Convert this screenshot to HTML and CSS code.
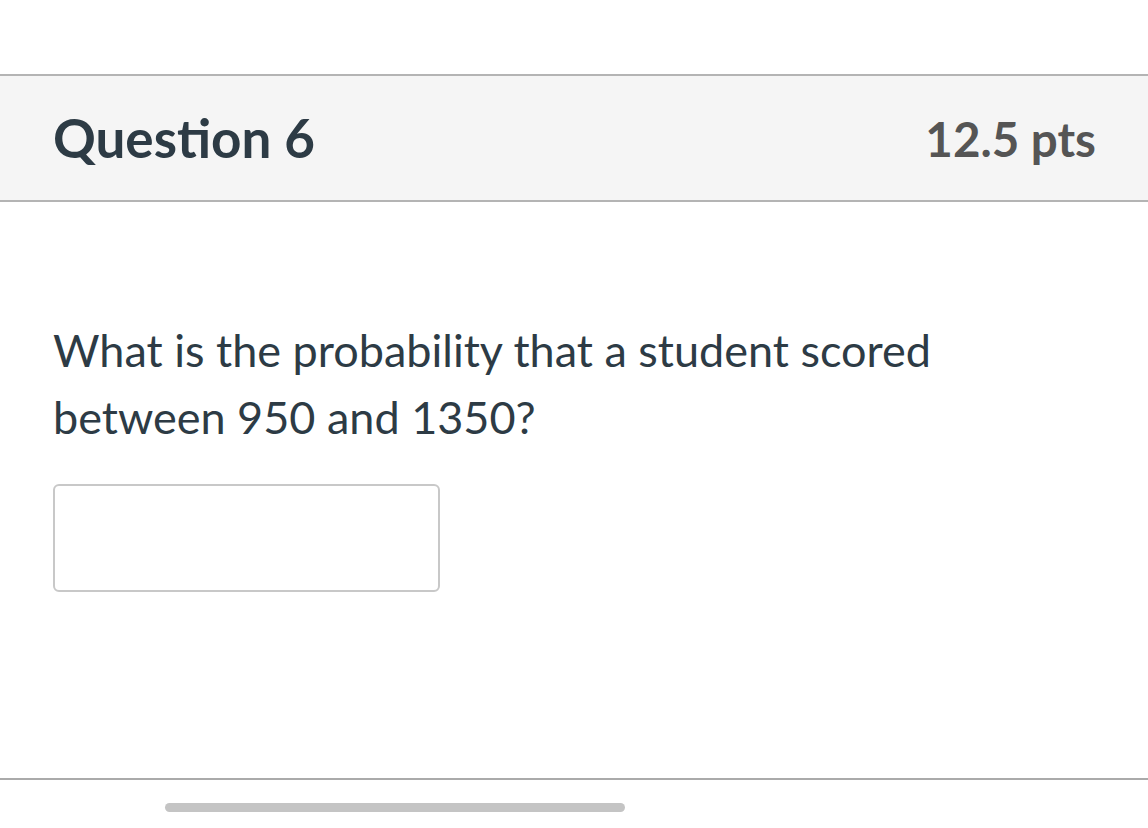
FILE: index.html
```html
<!DOCTYPE html>
<html lang="en">
<head>
<meta charset="utf-8">
<title>Question 6</title>
<link rel="stylesheet" href="styles.css">
</head>
<body>
<div class="page">
  <div class="question-header">
    <h2 class="question-title">Question 6</h2>
    <span class="question-points">12.5 pts</span>
  </div>
  <div class="question-body">
    <p class="question-text">What is the probability that a student scored between 950 and 1350?</p>
    <input class="answer-input" type="text" aria-label="Answer">
  </div>
  <div class="question-footer"></div>
  <div class="scroll-track">
    <div class="scroll-thumb"></div>
  </div>
</div>
</body>
</html>
```

FILE: styles.css
```css
html, body {
  margin: 0;
  padding: 0;
  background: #ffffff;
}

body {
  font-family: Lato, "Open Sans", "Liberation Sans", sans-serif;
  color: #2d3b45;
}

.page {
  padding-top: 74px;
}

.question-header {
  display: flex;
  align-items: center;
  justify-content: space-between;
  height: 124px;
  padding: 0 52px 0 53px;
  background: #f5f5f5;
  border-top: 2px solid #b4b4b4;
  border-bottom: 2px solid #b4b4b4;
}

.question-title {
  margin: 0;
  font-size: 53px;
  font-weight: 700;
  line-height: 1.2;
  color: #2d3b45;
}

.question-points {
  font-size: 47.5px;
  font-weight: 700;
  line-height: 1.2;
  color: #555555;
}

.question-body {
  padding: 115px 0 0 53px;
}

.question-text {
  margin: 0;
  max-width: 960px;
  font-size: 45px;
  line-height: 67px;
  font-weight: 400;
}

.answer-input {
  display: block;
  box-sizing: border-box;
  margin: 33px 0 0 0;
  width: 387px;
  height: 108px;
  border: 2px solid #c8c8c8;
  border-radius: 6px;
  background: #ffffff;
  outline: none;
}

.question-footer {
  margin-top: 186px;
  height: 0;
  border-top: 2px solid #aaaaaa;
}

.scroll-track {
  padding: 23px 0 0 165px;
}

.scroll-thumb {
  width: 460px;
  height: 9px;
  border-radius: 5px;
  background: #c4c4c4;
}
```
